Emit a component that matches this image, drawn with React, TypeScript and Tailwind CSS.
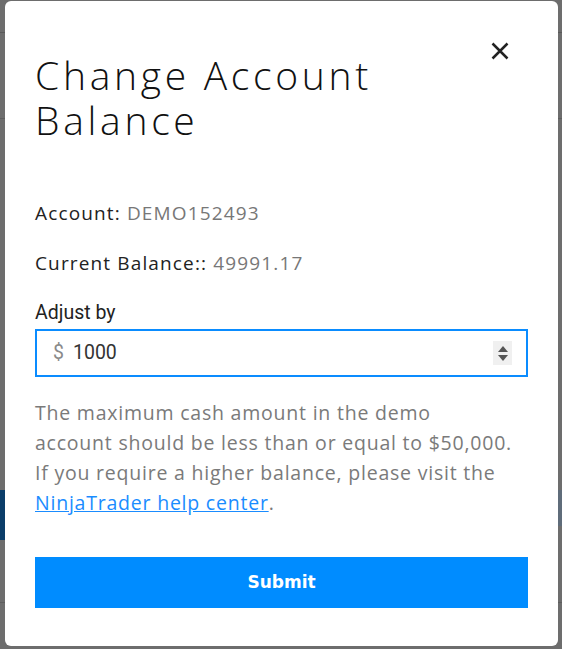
const BODY = "font-['Open_Sans',sans-serif]";

function Spinner() {
  return (
    <div className="flex h-6 w-[19px] flex-col items-center justify-center gap-[3px] bg-[#f0f0f0]">
      <svg width="10" height="6" viewBox="0 0 10 6">
        <path d="M5 0 L10 6 L0 6 Z" fill="#555" />
      </svg>
      <svg width="10" height="6" viewBox="0 0 10 6">
        <path d="M0 0 L10 0 L5 6 Z" fill="#555" />
      </svg>
    </div>
  );
}

export default function App() {
  return (
    <div className="relative h-[649px] w-[562px] overflow-hidden bg-[#6d6d6d]">
      {/* page behind the overlay */}
      <div className="absolute left-0 top-[32px] h-px w-full bg-[#5a5a5a]" />
      <div className="absolute left-0 top-[118px] h-px w-full bg-[#5e5e5e]" />
      <div className="absolute left-0 top-[490px] h-[50px] w-2 bg-[#0b3d69]" />
      <div className="absolute right-0 top-[490px] h-[36px] w-2 bg-[#5f6c7a]" />
      <div className="absolute left-0 top-[602px] h-px w-full bg-[#5e5e5e]" />

      {/* modal */}
      <div className="absolute left-[5px] top-[1px] flex h-[645px] w-[553px] flex-col rounded-md bg-white px-[30px] pb-[38px] pt-[51px]">
        <button className="absolute right-[49px] top-[41px] text-[#222]">
          <svg width="18" height="18" viewBox="0 0 18 18">
            <path d="M1.5 1.5 L16.5 16.5 M16.5 1.5 L1.5 16.5" stroke="currentColor" strokeWidth="2.5" />
          </svg>
        </button>

        <h2 className={`${BODY} text-[39px] font-light leading-[45px] tracking-[0.095em] text-[#111]`}>
          Change Account
          <br />
          Balance
        </h2>

        <div className={`${BODY} mt-[57px] flex flex-col gap-[22px] text-[19px] leading-[28px] tracking-[0.06em]`}>
          <p className="text-[#222]">
            Account: <span className="text-[#777]">DEMO152493</span>
          </p>
          <p className="text-[#222]">
            Current Balance:: <span className="text-[#777]">49991.17</span>
          </p>
        </div>

        <label className="mt-[22px] font-['Roboto',sans-serif] text-[19.5px] leading-[28px] text-[#222]">
          Adjust by
        </label>
        <div className="mt-[2px] flex h-12 items-center border-2 border-[#0a8cff] pl-4 pr-[14px] font-['Roboto',sans-serif] text-[19.5px]">
          <span className="text-[#8a8a8a]">$</span>
          <span className="ml-[9px] flex-1 text-[#333]">1000</span>
          <Spinner />
        </div>

        <p className={`${BODY} mt-[21px] text-[19.5px] leading-[30px] tracking-[0.04em] text-[#7a7a7a]`}>
          The maximum cash amount in the demo
          <br />
          account should be less than or equal to $50,000.
          <br />
          If you require a higher balance, please visit the{' '}
          <a href="#" className="text-[#1a8cff] underline">
            NinjaTrader help center
          </a>
          .
        </p>

        <button className="mt-auto flex h-[51px] w-full items-center justify-center bg-[#008cff] font-['DejaVu_Sans',sans-serif] text-[17px] font-bold text-white">
          Submit
        </button>
      </div>
    </div>
  );
}
